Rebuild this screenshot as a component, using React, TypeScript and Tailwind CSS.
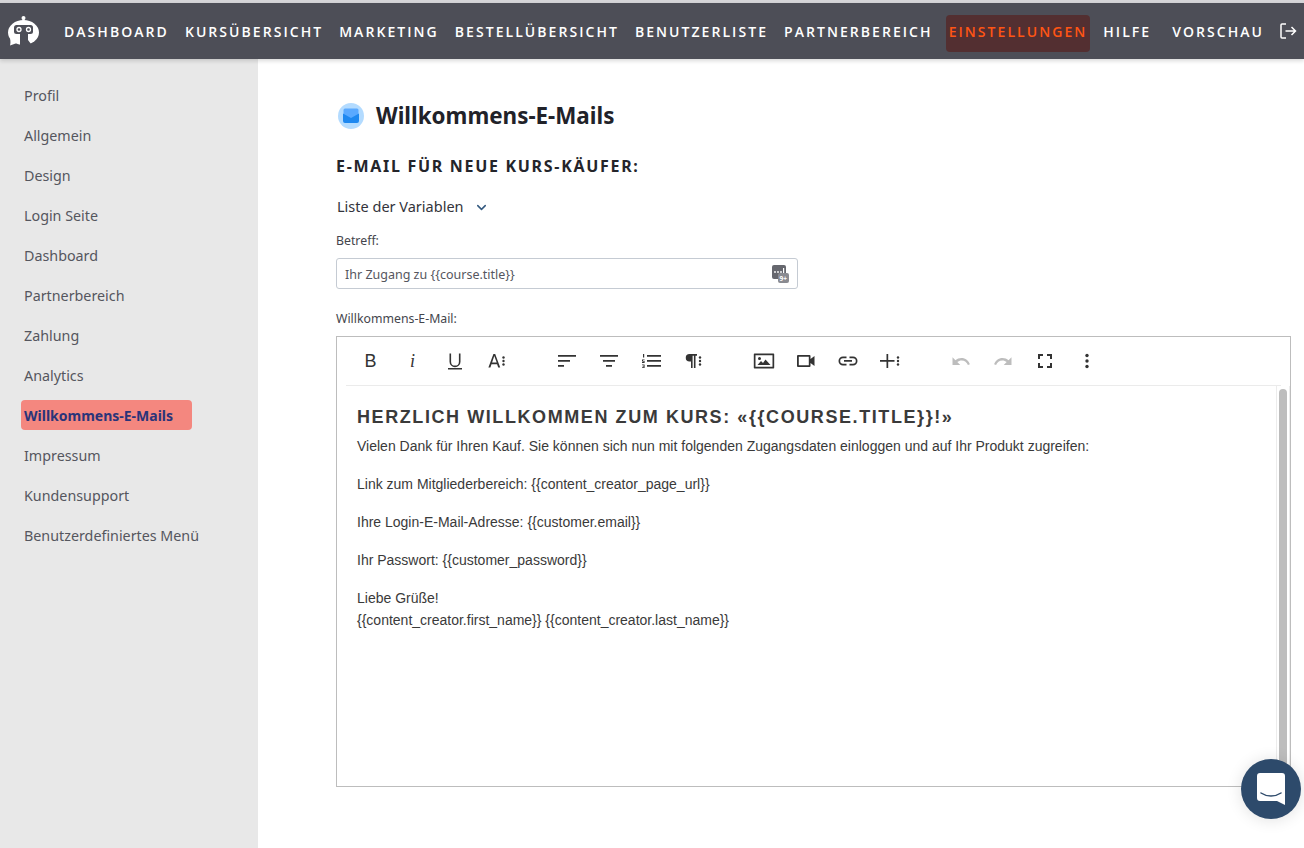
import { ChevronDown } from 'lucide-react'

const navItems = [
  { label: 'DASHBOARD', cls: 'ml-[24px]' },
  { label: 'KURSÜBERSICHT', cls: 'ml-[16px]' },
  { label: 'MARKETING', cls: 'ml-[16px]' },
  { label: 'BESTELLÜBERSICHT', cls: 'ml-[16px]' },
  { label: 'BENUTZERLISTE', cls: 'ml-[16px]' },
  { label: 'PARTNERBEREICH', cls: 'ml-[16px]' },
]

const sideItems = [
  'Profil',
  'Allgemein',
  'Design',
  'Login Seite',
  'Dashboard',
  'Partnerbereich',
  'Zahlung',
  'Analytics',
  'Willkommens-E-Mails',
  'Impressum',
  'Kundensupport',
  'Benutzerdefiniertes Menü',
]

function Dots({ x }: { x: number }) {
  return (
    <>
      <circle cx={x} cy="7.5" r="1.2" />
      <circle cx={x} cy="11" r="1.2" />
      <circle cx={x} cy="14.5" r="1.2" />
    </>
  )
}

function Tool({ children, cls = 'text-[#333]' }: { children: React.ReactNode; cls?: string }) {
  return (
    <span className={`flex h-5 w-[22px] items-center justify-center ${cls}`}>
      <svg width="22" height="22" viewBox="0 0 22 22" fill="currentColor">
        {children}
      </svg>
    </span>
  )
}

function Toolbar() {
  return (
    <div className="mx-[9px] flex h-[49px] items-center border-b border-[#ebebeb] pl-[14px] pb-[1px]">
      <div className="flex gap-5">
        <Tool>
          <text x="4.5" y="17" fontSize="18" fontFamily="Liberation Sans, sans-serif">B</text>
        </Tool>
        <Tool>
          <text x="8" y="17" fontSize="18" fontStyle="italic" fontFamily="Liberation Serif, serif">i</text>
        </Tool>
        <Tool>
          <path d="M5.5 3.5h1.6v8.2a3.9 3.9 0 0 0 7.8 0V3.5h1.6v8.2a5.5 5.5 0 0 1-11 0ZM4 18h14v1.6H4Z" />
        </Tool>
        <Tool>
          <path d="M7.4 4h1.8l5 13.5h-2l-1.1-3.2H5.5l-1.1 3.2h-2Zm-1.3 8.6h4.6L8.3 6Z" />
          <Dots x={17.5} />
        </Tool>
      </div>
      <div className="ml-[48px] flex gap-5">
        <Tool>
          <path d="M2 5h18v1.7H2ZM2 10h12v1.7H2ZM2 15h6v1.7H2Z" />
        </Tool>
        <Tool>
          <path d="M2 5h18v1.7H2ZM5 10h12v1.7H5ZM8 15h6v1.7H8Z" />
        </Tool>
        <Tool>
          <path d="M7 5h14v1.7H7ZM7 10h14v1.7H7ZM7 15h14v1.7H7ZM3 4h1.2v3.4H3ZM2 9.5h2.6v.8H3v.6h1.6v2H2v-.8h1.6v-.5H2ZM2 14.5h2.6v3.4H2v-.7h1.6v-.6H2.6v-.7h1V15.2H2Z" />
        </Tool>
        <Tool>
          <path d="M7.5 4H15v1.7h-1.5V18h-1.6V5.7h-1.3V18H9v-6.5h-1.5a3.75 3.75 0 0 1 0-7.5Z" />
          <Dots x={18} />
        </Tool>
      </div>
      <div className="ml-[49px] flex gap-5">
        <Tool>
          <path
            fillRule="evenodd"
            d="M1.5 3.5h19a.7.7 0 0 1 .7.7v13.6a.7.7 0 0 1-.7.7h-19a.7.7 0 0 1-.7-.7V4.2a.7.7 0 0 1 .7-.7Zm1 1.8v11.4h17V5.300ZM6.5 7a1.5 1.500 0 1 1 0 3 1.500 1.500 0 0 1 0-3ZM4.500 15l3.500-4 2 2 2.500-3.500L17.500 15Z"
          />
        </Tool>
        <Tool>
          <path
            fillRule="evenodd"
            d="M3 5h11.500a1 1 0 0 1 1 1v3l4-3v10l-4-3v3a1 1 0 0 1-1 1H3a1 1 0 0 1-1-1V6a1 1 0 0 1 1-1Zm.8 1.800v8.400h10V6.800Z"
          />
        </Tool>
        <Tool>
          <path d="M9.500 6.500H6a4.500 4.500 0 0 0 0 9h3.500v-1.700H6a2.800 2.800 0 0 1 0-5.600h3.500ZM12.500 6.500H16a4.500 4.500 0 0 1 0 9h-3.500v-1.700H16a2.800 2.800 0 0 0 0-5.600h-3.500ZM7 10.100h8v1.700H7Z" />
        </Tool>
        <Tool>
          <path d="M7.500 4h1.700v6h6.300v1.700H9.200V18H7.500v-6.300H1V10h6.500Z" />
          <Dots x={19} />
        </Tool>
      </div>
      <div className="ml-[49px] flex gap-5">
        <Tool cls="text-[#bdbdbd]">
          <path d="M11.500 8c-2.300 0-4.400.8-6 2.200L2.500 7.200V15h7.800l-3-3c1.200-1 2.700-1.600 4.300-1.600 2.900 0 5.400 1.800 6.300 4.500l2-.7C18.700 10.600 15.400 8 11.500 8Z" />
        </Tool>
        <Tool cls="text-[#bdbdbd]">
          <path d="M10.500 8c2.300 0 4.400.8 6 2.200l3-3V15h-7.800l3-3c-1.200-1-2.700-1.600-4.300-1.600-2.900 0-5.400 1.800-6.300 4.500l-2-.7C3.300 10.600 6.600 8 10.500 8Z" />
        </Tool>
        <Tool>
          <path d="M4 4h5v2H6v3H4ZM13 4h5v5h-2V6h-3ZM4 13h2v3h3v2H4ZM16 13h2v5h-5v-2h3Z" />
        </Tool>
        <Tool>
          <circle cx="11" cy="5.500" r="1.700" />
          <circle cx="11" cy="11" r="1.700" />
          <circle cx="11" cy="16.500" r="1.700" />
        </Tool>
      </div>
    </div>
  )
}

export default function App() {
  return (
    <div className="relative flex h-[848px] w-[1304px] flex-col overflow-hidden bg-white font-['Noto_Sans',sans-serif]">
      <div className="h-[3px] bg-[#d5d5d8]" />
      <header className="z-10 flex h-[56px] items-center bg-[#4d4e57] pl-[8px] shadow-[0_2px_4px_rgba(0,0,0,0.15)]">
        <svg width="32" height="32" viewBox="0 0 32 32" className="shrink-0">
          <circle cx="15.500" cy="3" r="2" fill="#fff" />
          <rect x="14.500" y="3" width="2" height="4" fill="#fff" />
          <ellipse cx="15.500" cy="17.500" rx="15.500" ry="12.500" fill="#fff" />
          <path d="M2 23l7 5-7 2.500c.6-2 .6-4 0-7.500Z" fill="#fff" />
          <rect x="6" y="10" width="19" height="9" rx="2.500" fill="#4d4e57" />
          <circle cx="11" cy="14.500" r="2" fill="#4d4e57" stroke="#fff" strokeWidth="1.300" />
          <circle cx="20.500" cy="14.500" r="2" fill="#4d4e57" stroke="#fff" strokeWidth="1.300" />
          <path d="M12 18h8v7l4.500 6H12Z" fill="#4d4e57" />
        </svg>
        <nav className="flex items-center font-['Open_Sans',sans-serif] text-[14px] font-semibold tracking-[2.05px] whitespace-nowrap text-white">
          {navItems.map((item) => (
            <span key={item.label} className={item.cls}>
              {item.label}
            </span>
          ))}
          <span className="mt-[4px] ml-[13px] flex h-[37px] items-center rounded-[4px] bg-[#532f31] px-[3px] pb-[4px] text-[#ff5514]">
            EINSTELLUNGEN
          </span>
          <span className="ml-[13px]">HILFE</span>
          <span className="ml-[21px]">VORSCHAU</span>
        </nav>
        <svg width="18" height="18" viewBox="0 0 18 18" fill="none" stroke="#fff" strokeWidth="1.500" className="ml-[15px] shrink-0">
          <path d="M7 2H3a1 1 0 0 0-1 1v12a1 1 0 0 0 1 1h4M6.500 9H16M12.500 5l4 4-4 4" />
        </svg>
      </header>

      <div className="flex min-h-0 flex-1">
        <aside className="w-[258px] shrink-0 bg-[#e8e8e8] pt-[17px] pl-[21px]">
          {sideItems.map((item) =>
            item === 'Willkommens-E-Mails' ? (
              <div key={item} className="flex h-10 items-center">
                <span className="-mt-[2px] flex h-[30px] w-[171px] items-center rounded-[4px] bg-[#f4877f] pl-[3px] text-[14px] font-bold text-[#2a3479]">
                  {item}
                </span>
              </div>
            ) : (
              <div key={item} className="flex h-10 items-center pl-[3px] text-[14.3px] text-[#55565e]">
                {item}
              </div>
            ),
          )}
        </aside>

        <main className="min-w-0 flex-1 pt-[38px] pr-[13px] pl-[78px]">
          <div className="flex items-center">
            <svg width="28" height="28" viewBox="0 0 28 28" className="ml-[1px] shrink-0">
              <circle cx="14" cy="14" r="13" fill="#b3dbff" />
              <path d="M8 6.500h12a1.500 1.500 0 0 1 1.500 1.500v5L14 17l-7.500-4V8A1.500 1.500 0 0 1 8 6.500Z" fill="#5aa9ff" />
              <path d="M6 11.500 14 16l8-4.500V19a2 2 0 0 1-2 2H8a2 2 0 0 1-2-2Z" fill="#1e88f0" />
            </svg>
            <h1 className="ml-[11px] text-[22.4px] leading-[38px] font-bold text-[#212229]">Willkommens-E-Mails</h1>
          </div>
          <h2 className="mt-[19px] text-[16px] leading-[24px] font-bold tracking-[1.7px] text-[#24252b]">E-MAIL FÜR NEUE KURS-KÄUFER:</h2>
          <div className="mt-[17px] flex h-6 items-center pl-[1px] text-[14.5px] text-[#33343b]">
            Liste der Variablen
            <ChevronDown className="ml-[10px] h-[15px] w-[15px] text-[#33597f]" strokeWidth={2.4} />
          </div>
          <label className="mt-[13px] block text-[12.3px] leading-[18px] text-[#44454c]">Betreff:</label>
          <div className="mt-[8px] flex h-[31px] w-[462px] items-center justify-between rounded-[3px] border border-[#c5cbd3] pr-[8px] pl-[8px] text-[12.5px] text-[#55565e]">
            <span className="pt-[3px]">Ihr Zugang zu {'{{course.title}}'}</span>
            <svg width="17" height="19" viewBox="0 0 17 19" className="mt-[2px]">
              <rect x="0" y="0" width="14" height="14" rx="2" fill="#66676e" />
              <rect x="6" y="8" width="11" height="10" rx="2" fill="#8a8b91" />
              <circle cx="3" cy="7" r="0.900" fill="#fff" />
              <circle cx="6" cy="7" r="0.900" fill="#fff" />
              <circle cx="9" cy="7" r="0.900" fill="#fff" />
              <rect x="11" y="3" width="1.200" height="5" fill="#fff" />
              <text x="7.500" y="16" fontSize="6.500" fontWeight="700" fill="#fff">9+</text>
            </svg>
          </div>
          <label className="mt-[21px] block text-[12.3px] leading-[18px] text-[#44454c]">Willkommens-E-Mail:</label>
          <div className="mt-[8px] flex h-[451px] w-[955px] flex-col border border-[#bdbdbd]">
            <Toolbar />
            <div className="flex min-h-0 flex-1">
              <div className="min-w-0 flex-1 pt-[20px] pl-[20px] font-['Liberation_Sans',sans-serif] text-[14px] leading-[22px] text-[#3a3a3a]">
                <h3 className="text-[18px] leading-[22px] font-bold tracking-[1.58px] text-[#3a3a3a]">
                  HERZLICH WILLKOMMEN ZUM KURS: «{'{{COURSE.TITLE}}'}!»
                </h3>
                <p className="mt-[7px]">
                  Vielen Dank für Ihren Kauf. Sie können sich nun mit folgenden Zugangsdaten einloggen und auf Ihr Produkt zugreifen:
                </p>
                <p className="mt-4">Link zum Mitgliederbereich: {'{{content_creator_page_url}}'}</p>
                <p className="mt-4">Ihre Login-E-Mail-Adresse: {'{{customer.email}}'}</p>
                <p className="mt-4">Ihr Passwort: {'{{customer_password}}'}</p>
                <p className="mt-4">
                  Liebe Grüße!
                  <br />
                  {'{{content_creator.first_name}} {{content_creator.last_name}}'}
                </p>
              </div>
              <div className="w-[14px] shrink-0 border-x border-[#ececec] px-[2px] pt-[3px]">
                <div className="h-[400px] rounded-t-[4px] bg-[#bdbdbd]" />
              </div>
            </div>
          </div>
        </main>
      </div>

      <div className="absolute top-[759px] left-[1241px] flex h-[60px] w-[60px] items-center justify-center rounded-full bg-[#2d4a6b] shadow-[0_1px_16px_rgba(0,0,0,0.12)]">
        <svg width="28" height="32" viewBox="0 0 28 32">
          <path d="M3 0h22a3 3 0 0 1 3 3v29l-8-4H3a3 3 0 0 1-3-3V3a3 3 0 0 1 3-3Z" fill="#fff" />
          <path d="M4 20c6 4 14 4 20 0" fill="none" stroke="#2d4a6b" strokeWidth="1.500" strokeLinecap="round" />
        </svg>
      </div>
    </div>
  )
}
